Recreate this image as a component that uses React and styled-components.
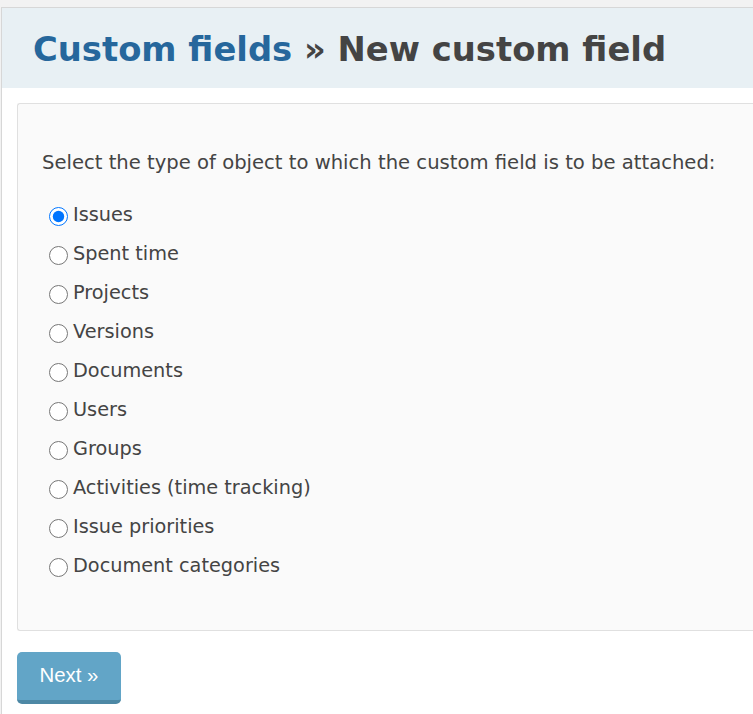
import React from "react";
import styled, { createGlobalStyle } from "styled-components";

const GlobalStyle = createGlobalStyle`
  html, body {
    margin: 0;
    padding: 0;
    background: #f2f2f2;
  }
  body {
    font-family: "DejaVu Sans", Verdana, sans-serif;
    color: #444;
  }
`;

const Wrapper = styled.div`
  margin-top: 7px;
  margin-left: 1px;
  min-height: 707px;
  background: #fff;
  border-top: 1px solid #d7d7d7;
  border-left: 1px solid #d7d7d7;
`;

const Header = styled.div`
  height: 80px;
  background: #e8f0f4;
  padding-left: 31px;
  display: flex;
  align-items: center;
`;

const Title = styled.h2`
  margin: 0;
  font-size: 33.8px;
  font-weight: bold;
  color: #444;
  white-space: nowrap;
  padding-top: 3px;
`;

const Crumb = styled.a`
  color: #26679c;
  text-decoration: none;
`;

const Content = styled.div`
  padding: 15px 0 0 15px;
`;

const Box = styled.form`
  background: #fafafa;
  border: 1px solid #e0e0e0;
  border-right: none;
  border-radius: 3px 0 0 3px;
  padding: 45px 0 45px 24px;
`;

const Intro = styled.p`
  margin: 0 0 18px 0;
  font-size: 19.6px;
  line-height: 28px;
  color: #444;
`;

const Options = styled.div`
  display: flex;
  flex-direction: column;
`;

const Option = styled.label`
  display: flex;
  align-items: center;
  height: 39px;
  font-size: 19.3px;
  color: #444;
  cursor: pointer;
`;

const Radio = styled.input`
  width: 19px;
  height: 19px;
  margin: 3px 5px 0 7px;
`;

const Next = styled.button`
  margin-top: 21px;
  width: 104px;
  height: 52px;
  background: #62a5c7;
  color: #fff;
  border: none;
  border-bottom: 4px solid #4d88a5;
  border-radius: 5px;
  font-family: "Liberation Sans", Arial, sans-serif;
  font-size: 20.4px;
  padding: 0 0 1px 0;
  cursor: pointer;
`;

const types = [
  "Issues",
  "Spent time",
  "Projects",
  "Versions",
  "Documents",
  "Users",
  "Groups",
  "Activities (time tracking)",
  "Issue priorities",
  "Document categories",
];

export default function App() {
  const [selected, setSelected] = React.useState("Issues");
  return (
    <>
      <GlobalStyle />
      <Wrapper>
        <Header>
          <Title>
            <Crumb href="#">Custom fields</Crumb> » New custom field
          </Title>
        </Header>
        <Content>
          <Box>
            <Intro>Select the type of object to which the custom field is to be attached:</Intro>
            <Options>
              {types.map((t) => (
                <Option key={t}>
                  <Radio
                    type="radio"
                    name="type"
                    checked={selected === t}
                    onChange={() => setSelected(t)}
                  />
                  {t}
                </Option>
              ))}
            </Options>
          </Box>
          <Next type="button">Next »</Next>
        </Content>
      </Wrapper>
    </>
  );
}
